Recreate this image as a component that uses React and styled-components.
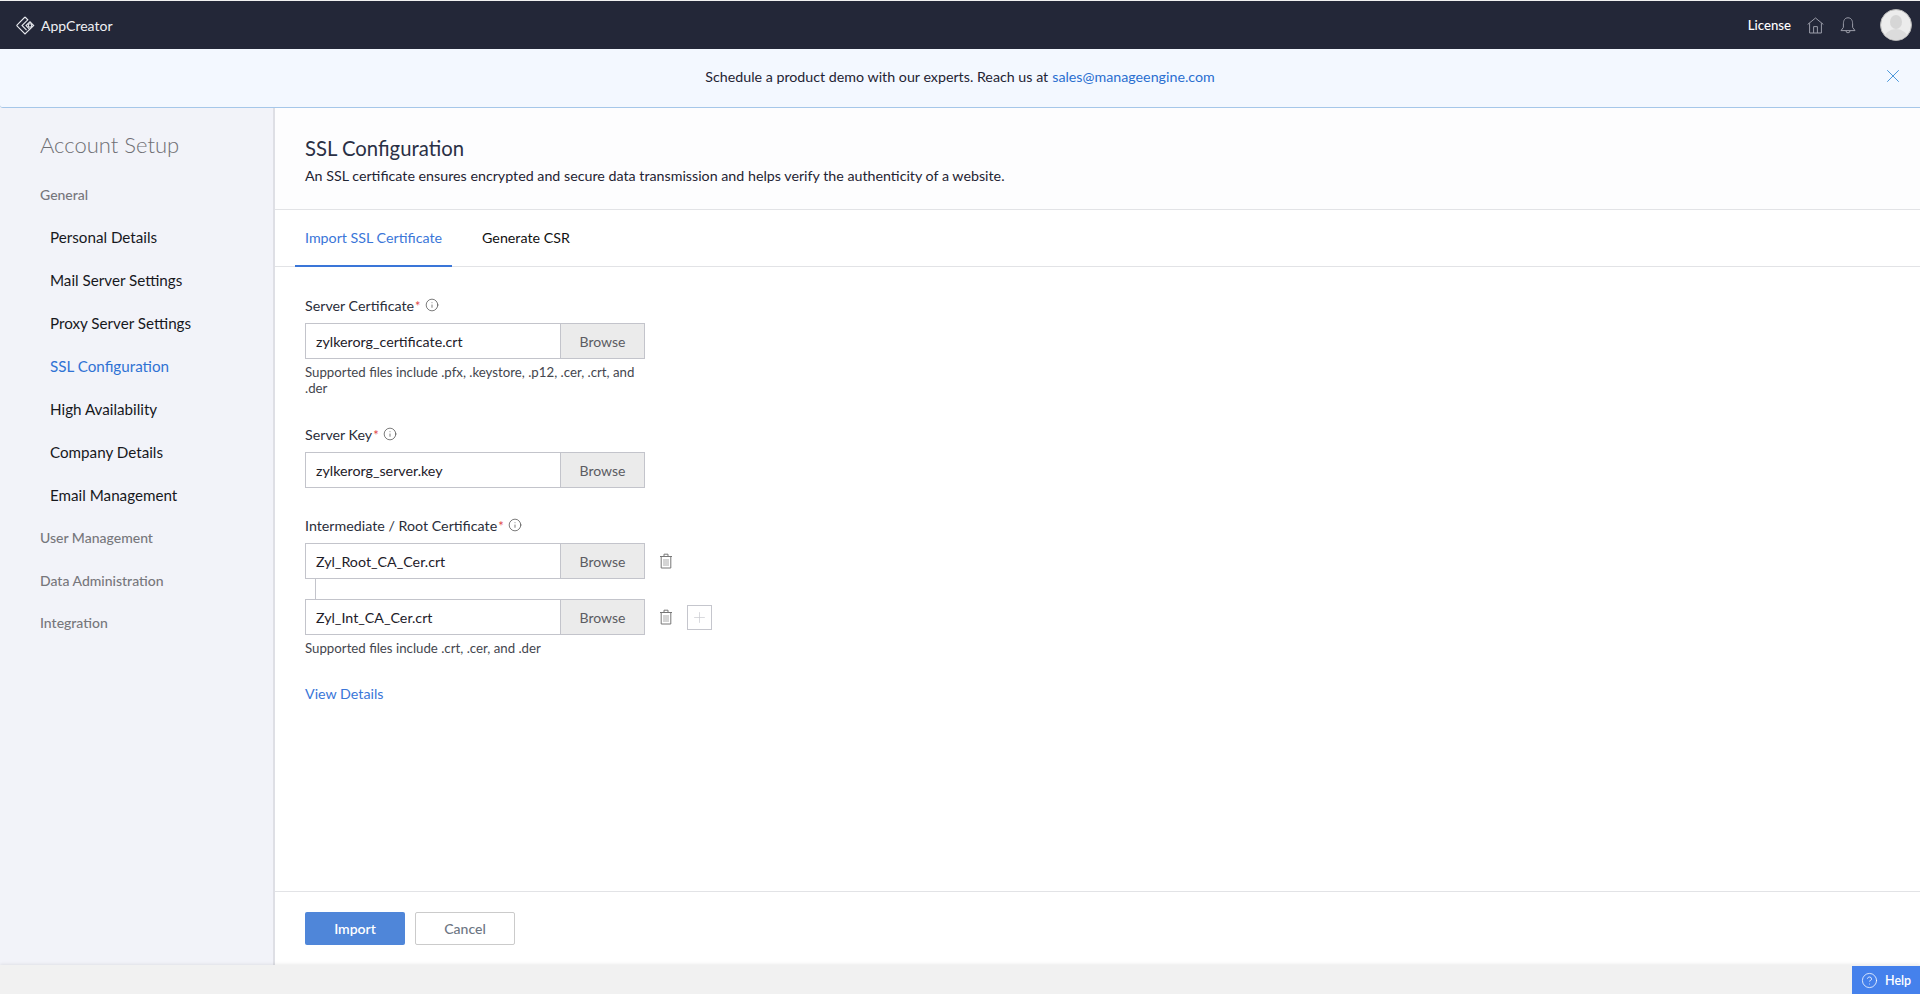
import styled, { createGlobalStyle } from "styled-components";
import { CircleHelp, Info, Plus, X } from "lucide-react";

const GlobalStyle = createGlobalStyle`
  html, body {
    margin: 0;
    padding: 0;
    height: 100%;
    background: #f1f1f1;
    font-family: Lato, "Open Sans", sans-serif;
    color: #1f2433;
  }
  * { box-sizing: border-box; }
`;

const Page = styled.div`
  height: 994px;
  display: flex;
  flex-direction: column;
  overflow: hidden;
`;

const TopBar = styled.header`
  height: 48px;
  flex: none;
  margin-top: 1px;
  display: flex;
  align-items: center;
  justify-content: space-between;
  padding: 0 8px 0 16px;
  background: #232738;
  color: #fff;
`;

const Brand = styled.div`
  display: flex;
  align-items: center;
  gap: 6px;
  font-size: 14px;
  color: #eef0f4;
`;

const TopActions = styled.div`
  display: flex;
  align-items: center;
`;

const LicenseLink = styled.a`
  font-size: 13.2px;
  font-weight: 500;
  color: #fff;
  margin-right: 16px;
`;

const TopIcon = styled.span`
  display: flex;
  color: #9a9ca8;
  margin-right: ${(p) => p.$gap}px;
`;

const Avatar = styled.div`
  width: 32px;
  height: 32px;
  border-radius: 50%;
  border: 1px solid #b4b4b4;
  background: #ececec;
  overflow: hidden;
`;

const Banner = styled.div`
  height: 59px;
  flex: none;
  display: flex;
  align-items: center;
  justify-content: center;
  padding-bottom: 3px;
  background: #f3f8ff;
  border-bottom: 1px solid #a5c7e9;
  border-radius: 0 0 0 3px;
  font-size: 14.25px;
  position: relative;
`;

const BannerLink = styled.a`
  color: #2a6fd0;
  margin-left: 4px;
`;

const CloseButton = styled.span`
  position: absolute;
  right: 16px;
  top: 16px;
  display: flex;
  color: #3a8ed8;
`;

const Body = styled.div`
  flex: 1;
  min-height: 0;
  display: flex;
`;

const Sidebar = styled.aside`
  width: 275px;
  flex: none;
  padding: 22px 0 0 40px;
  background: #f2f3f9;
  border-right: 2px solid #dedfe5;
`;

const SidebarTitle = styled.h2`
  margin: 0 0 13px;
  font-size: 22px;
  line-height: 30px;
  font-weight: 300;
  color: #6f6f74;
`;

const GroupTitle = styled.div`
  height: 42.5px;
  display: flex;
  align-items: center;
  font-size: 14px;
  font-weight: 500;
  color: #77777c;
`;

const NavItem = styled.a`
  height: 43px;
  display: flex;
  align-items: center;
  padding-left: 10px;
  font-size: 15.2px;
  color: ${(p) => (p.$active ? "#2f72d4" : "#17181d")};
`;

const Main = styled.main`
  flex: 1;
  display: flex;
  flex-direction: column;
  background: #fff;
`;

const Header = styled.div`
  height: 102px;
  flex: none;
  padding: 26px 30px 0;
  background: #fdfdfe;
  border-bottom: 1px solid #e2e3e6;
`;

const Title = styled.h1`
  margin: 0;
  font-size: 20.3px;
  line-height: 28px;
  font-weight: 400;
  color: #2a3045;
`;

const Description = styled.p`
  margin: 3px 0 0;
  font-size: 14.25px;
  line-height: 22px;
  color: #1f2433;
`;

const Tabs = styled.nav`
  height: 57px;
  flex: none;
  display: flex;
  padding-left: 20px;
  border-bottom: 1px solid #e2e3e6;
`;

const Tab = styled.a`
  height: 57px;
  display: flex;
  align-items: center;
  padding: 0 10px;
  margin-right: 20px;
  font-size: 14.25px;
  color: ${(p) => (p.$active ? "#3a76d8" : "#111")};
  border-bottom: 2px solid ${(p) => (p.$active ? "#3a76d8" : "transparent")};
`;

const Form = styled.div`
  flex: 1;
  padding: 28px 30px 0;
`;

const Field = styled.div`
  margin-bottom: ${(p) => p.$gap}px;
`;

const Label = styled.label`
  height: 20px;
  margin-bottom: 8px;
  display: flex;
  align-items: center;
  font-size: 14.25px;
  color: #2a2e3a;
`;

const Required = styled.sup`
  color: #e04848;
  font-size: 13px;
  line-height: 0;
  margin: 0 4px 0 1px;
  position: relative;
  top: 1px;
`;

const InfoIcon = styled(Info)`
  color: #444;
`;

const FileRow = styled.div`
  display: flex;
  align-items: center;
`;

const FileBox = styled.div`
  width: 340px;
  height: 36px;
  display: flex;
  border: 1px solid #c3c4cb;
  background: #fff;
`;

const FileName = styled.div`
  flex: 1;
  display: flex;
  align-items: center;
  padding-left: 10px;
  font-size: 14.25px;
  color: #1d2029;
`;

const BrowseButton = styled.div`
  width: 84px;
  display: flex;
  align-items: center;
  justify-content: center;
  background: #ebebeb;
  border-left: 1px solid #c3c4cb;
  font-size: 14px;
  color: #5b5c62;
`;

const TrashButton = styled.svg`
  width: 14px;
  height: 16px;
  margin-left: 14px;
  color: #777;
`;

const AddButton = styled.div`
  width: 25px;
  height: 25px;
  margin-left: 14px;
  display: flex;
  align-items: center;
  justify-content: center;
  border: 1px solid #c5c6cd;
  color: #c9cad0;
`;

const Connector = styled.div`
  width: 1px;
  height: 20px;
  margin-left: 10px;
  background: #c3c4cb;
`;

const Hint = styled.p`
  width: 340px;
  margin: 5px 0 0;
  font-size: 13.25px;
  line-height: 16px;
  color: #44464e;
`;

const ViewDetails = styled.a`
  display: block;
  margin-top: 29px;
  font-size: 14.25px;
  color: #3a76d8;
`;

const Footer = styled.div`
  height: 74px;
  flex: none;
  display: flex;
  gap: 10px;
  padding: 20px 30px 0;
  border-top: 1px solid #e2e3e6;
`;

const PrimaryButton = styled.button`
  width: 100px;
  height: 33px;
  border: 0;
  border-radius: 2px;
  background: #4f86d9;
  color: #fff;
  font: 600 14px Lato, sans-serif;
`;

const SecondaryButton = styled.button`
  width: 100px;
  height: 33px;
  border: 1px solid #cbcbcb;
  border-radius: 2px;
  background: #fff;
  color: #6d7683;
  font: 500 14px Lato, sans-serif;
`;

const BottomStrip = styled.div`
  height: 29px;
  flex: none;
  display: flex;
  justify-content: flex-end;
  background: #f1f1f1;
  box-shadow: 0 -1px 3px rgba(0, 0, 0, 0.08);
`;

const HelpButton = styled.a`
  width: 68px;
  margin-top: 1px;
  display: flex;
  align-items: center;
  gap: 7px;
  padding-left: 9px;
  background: #4581ec;
  color: #fff;
  font-size: 12.5px;
  font-weight: 600;
`;

const setupLinks = [
  "Personal Details",
  "Mail Server Settings",
  "Proxy Server Settings",
  "SSL Configuration",
  "High Availability",
  "Company Details",
  "Email Management",
];

function Logo() {
  return (
    <svg width="19" height="19" viewBox="0 0 19 19" fill="none" stroke="#e8eaef" strokeWidth="1.1">
      <path d="M9 1 L1.2 8.8 a1 1 0 0 0 0 1.4 L9 18 L17.7 9.5 L14 5.8 L10 9.5 L13.2 12.8" />
      <path d="M9 1 L11.8 3.8 L6 9.5 L10.6 14.2" />
      <circle cx="14" cy="9.5" r="1.7" />
    </svg>
  );
}

function HomeIcon() {
  return (
    <svg width="17" height="17" viewBox="0 0 17 17" fill="none" stroke="currentColor" strokeWidth="1">
      <path d="M.7 7.4 L8.5 1 L16.3 7.4" />
      <path d="M2.6 6.2 V16 H14.4 V6.2" />
      <path d="M6.6 16 V9.6 H10.4 V16" />
    </svg>
  );
}

function BellIcon() {
  return (
    <svg width="16" height="17" viewBox="0 0 16 17" fill="none" stroke="currentColor" strokeWidth="1">
      <path d="M8 .8 C4.6 .8 3.4 3.6 3.4 6.8 V10.4 L1 13.6 H15 L12.6 10.4 V6.8 C12.6 3.6 11.4 .8 8 .8 Z" />
      <path d="M6 13.8 a2 2 0 0 0 4 0" />
    </svg>
  );
}

function AvatarFace() {
  return (
    <svg width="30" height="30" viewBox="0 0 30 30">
      <ellipse cx="15" cy="12" rx="6" ry="7" fill="#d6d6d6" />
      <ellipse cx="15" cy="29" rx="12" ry="10" fill="#dcdcdc" />
    </svg>
  );
}

function TrashIcon() {
  return (
    <TrashButton viewBox="0 0 14 16" fill="none" stroke="currentColor" strokeWidth="1">
      <path d="M1 3.5 H13" />
      <path d="M5 3.3 V1.2 H9 V3.3" />
      <path d="M2.2 3.5 V15 H11.8 V3.5" />
      <path d="M5 6 V13 M7 6 V13 M9 6 V13" stroke="#aaa" />
    </TrashButton>
  );
}

function FileInput({ name }) {
  return (
    <FileBox>
      <FileName>{name}</FileName>
      <BrowseButton>Browse</BrowseButton>
    </FileBox>
  );
}

function FieldLabel({ children }) {
  return (
    <Label>
      {children}
      <Required>*</Required>
      <InfoIcon size={14} strokeWidth={1.2} />
    </Label>
  );
}

export default function App() {
  return (
    <Page>
      <GlobalStyle />
      <TopBar>
        <Brand>
          <Logo />
          AppCreator
        </Brand>
        <TopActions>
          <LicenseLink>License</LicenseLink>
          <TopIcon $gap={16}>
            <HomeIcon />
          </TopIcon>
          <TopIcon $gap={24}>
            <BellIcon />
          </TopIcon>
          <Avatar>
            <AvatarFace />
          </Avatar>
        </TopActions>
      </TopBar>
      <Banner>
        Schedule a product demo with our experts. Reach us at
        <BannerLink>sales@manageengine.com</BannerLink>
        <CloseButton>
          <X size={22} strokeWidth={1} />
        </CloseButton>
      </Banner>
      <Body>
        <Sidebar>
          <SidebarTitle>Account Setup</SidebarTitle>
          <GroupTitle>General</GroupTitle>
          {setupLinks.map((link) => (
            <NavItem key={link} $active={link === "SSL Configuration"}>
              {link}
            </NavItem>
          ))}
          <GroupTitle>User Management</GroupTitle>
          <GroupTitle>Data Administration</GroupTitle>
          <GroupTitle>Integration</GroupTitle>
        </Sidebar>
        <Main>
          <Header>
            <Title>SSL Configuration</Title>
            <Description>
              An SSL certificate ensures encrypted and secure data transmission and helps verify the
              authenticity of a website.
            </Description>
          </Header>
          <Tabs>
            <Tab $active>Import SSL Certificate</Tab>
            <Tab>Generate CSR</Tab>
          </Tabs>
          <Form>
            <Field $gap={28}>
              <FieldLabel>Server Certificate</FieldLabel>
              <FileRow>
                <FileInput name="zylkerorg_certificate.crt" />
              </FileRow>
              <Hint>Supported files include .pfx, .keystore, .p12, .cer, .crt, and .der</Hint>
            </Field>
            <Field $gap={27}>
              <FieldLabel>Server Key</FieldLabel>
              <FileRow>
                <FileInput name="zylkerorg_server.key" />
              </FileRow>
            </Field>
            <Field $gap={0}>
              <FieldLabel>Intermediate / Root Certificate</FieldLabel>
              <FileRow>
                <FileInput name="Zyl_Root_CA_Cer.crt" />
                <TrashIcon />
              </FileRow>
              <Connector />
              <FileRow>
                <FileInput name="Zyl_Int_CA_Cer.crt" />
                <TrashIcon />
                <AddButton>
                  <Plus size={17} strokeWidth={1} />
                </AddButton>
              </FileRow>
              <Hint>Supported files include .crt, .cer, and .der</Hint>
            </Field>
            <ViewDetails>View Details</ViewDetails>
          </Form>
          <Footer>
            <PrimaryButton>Import</PrimaryButton>
            <SecondaryButton>Cancel</SecondaryButton>
          </Footer>
        </Main>
      </Body>
      <BottomStrip>
        <HelpButton>
          <CircleHelp size={17} strokeWidth={1.1} />
          Help
        </HelpButton>
      </BottomStrip>
    </Page>
  );
}
